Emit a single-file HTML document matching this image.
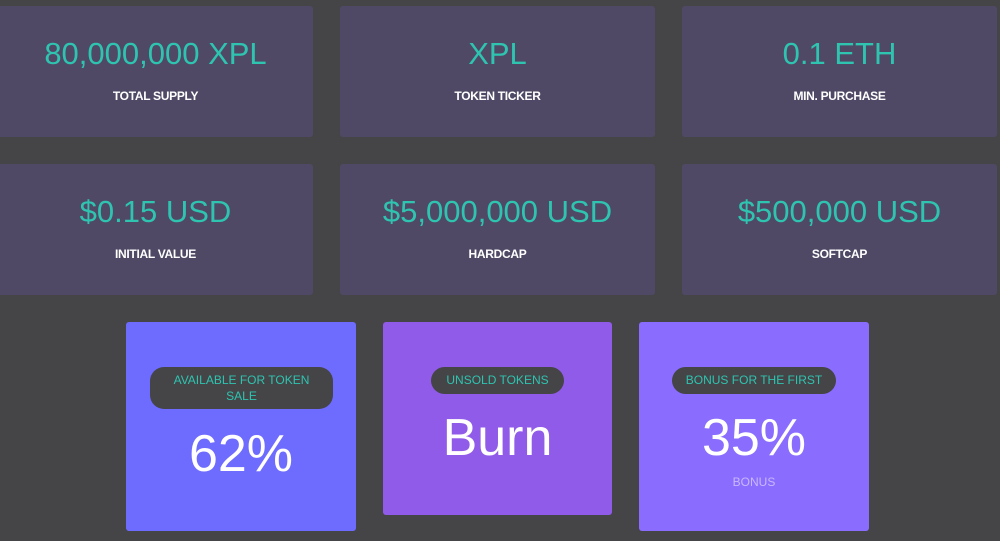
<!DOCTYPE html>
<html><head><style>
*{margin:0;padding:0;box-sizing:border-box}
body{width:1000px;height:541px;background:#454547;position:relative;overflow:hidden;font-family:"Liberation Sans",sans-serif}
.c{position:absolute;width:315px;height:131px;background:#4f4966;border-radius:3px;text-align:center}
.v{position:absolute;left:0;right:0;top:30px;font-size:31px;color:#2ec4b0;font-weight:300;letter-spacing:0px}
.l{position:absolute;left:0;right:0;top:83px;font-size:12px;color:#fff;font-weight:bold;letter-spacing:-0.3px}
.b{position:absolute;top:322px;width:230px;border-radius:3px;text-align:center;color:#fff}
.p{position:absolute;background:#454547;color:#2ec4b0;font-size:12px;border-radius:14px;line-height:16px;padding:5px 10px}
.n{position:absolute;left:0;right:0;font-size:52px;font-weight:300}
</style></head><body>
<div class="c" style="left:-2px;top:6px"><div class="v">80,000,000 XPL</div><div class="l">TOTAL SUPPLY</div></div>
<div class="c" style="left:340px;top:6px"><div class="v">XPL</div><div class="l">TOKEN TICKER</div></div>
<div class="c" style="left:682px;top:6px"><div class="v">0.1 ETH</div><div class="l">MIN. PURCHASE</div></div>
<div class="c" style="left:-2px;top:164px"><div class="v">$0.15 USD</div><div class="l">INITIAL VALUE</div></div>
<div class="c" style="left:340px;top:164px"><div class="v">$5,000,000 USD</div><div class="l">HARDCAP</div></div>
<div class="c" style="left:682px;top:164px"><div class="v">$500,000 USD</div><div class="l">SOFTCAP</div></div>
<div class="b" style="left:126px;height:209px;background:#6e6bff">
<div class="p" style="left:24px;top:45px;width:183px">AVAILABLE FOR TOKEN SALE</div>
<div class="n" style="top:102px">62%</div></div>
<div class="b" style="left:383px;height:193px;width:229px;background:#915be9">
<div class="p" style="left:48px;top:45px;width:133px;height:27px">UNSOLD TOKENS</div>
<div class="n" style="top:86px">Burn</div></div>
<div class="b" style="left:639px;height:209px;background:#8a6cff">
<div class="p" style="left:33px;top:45px;width:164px;height:27px">BONUS FOR THE FIRST</div>
<div class="n" style="top:86px">35%</div>
<div style="position:absolute;left:0;right:0;top:153px;font-size:12px;color:#c9b8ff">BONUS</div></div>
</body></html>
